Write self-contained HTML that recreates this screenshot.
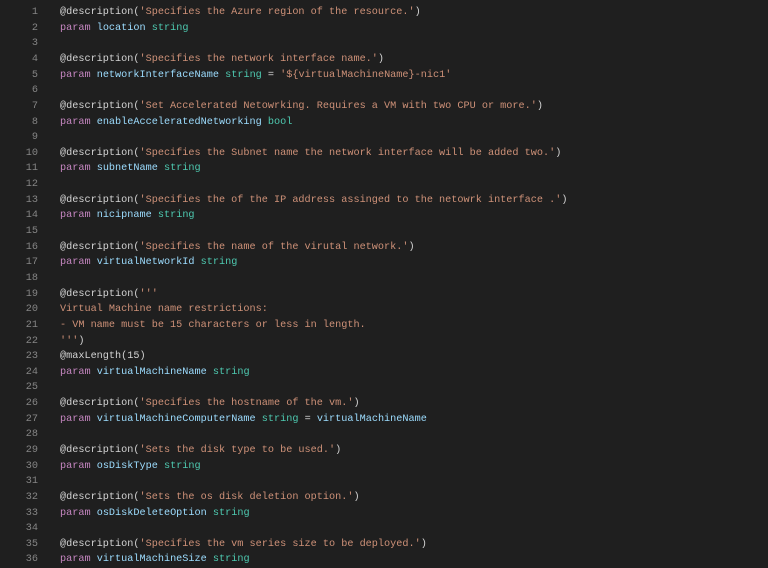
<!DOCTYPE html>
<html><head><meta charset="utf-8"><style>
html,body{margin:0;padding:0;background:#1f1f1f;width:768px;height:560px;overflow:hidden}
.ed{position:absolute;left:0;top:-10.6px;font-family:"Liberation Mono",monospace;font-size:10.2px;line-height:15.65px;color:#d4d4d4}
.l{height:15.65px;position:relative}
.n{position:absolute;left:0;width:38px;text-align:right;color:#858585}
.c{position:absolute;left:60px;white-space:pre}
.d{color:#d4d4d4}
.s{color:#ce9178}
.k{color:#c586c0}
.v{color:#9cdcfe}
.t{color:#4ec9b0}
</style></head><body><div class="ed"><div class="l"><span class="n"></span><span class="c"><span class="d">@description(</span><span class="s">'Specifies the location of the resource group, deployment will be performed in.'</span>)</span></div><div class="l"><span class="n">1</span><span class="c"><span class="d">@description(</span><span class="s">'Specifies the Azure region of the resource.'</span>)</span></div><div class="l"><span class="n">2</span><span class="c"><span class="k">param</span> <span class="v">location</span> <span class="t">string</span></span></div><div class="l"><span class="n">3</span></div><div class="l"><span class="n">4</span><span class="c"><span class="d">@description(</span><span class="s">'Specifies the network interface name.'</span>)</span></div><div class="l"><span class="n">5</span><span class="c"><span class="k">param</span> <span class="v">networkInterfaceName</span> <span class="t">string</span> = <span class="s">'${virtualMachineName}-nic1'</span></span></div><div class="l"><span class="n">6</span></div><div class="l"><span class="n">7</span><span class="c"><span class="d">@description(</span><span class="s">'Set Accelerated Netowrking. Requires a VM with two CPU or more.'</span>)</span></div><div class="l"><span class="n">8</span><span class="c"><span class="k">param</span> <span class="v">enableAcceleratedNetworking</span> <span class="t">bool</span></span></div><div class="l"><span class="n">9</span></div><div class="l"><span class="n">10</span><span class="c"><span class="d">@description(</span><span class="s">'Specifies the Subnet name the network interface will be added two.'</span>)</span></div><div class="l"><span class="n">11</span><span class="c"><span class="k">param</span> <span class="v">subnetName</span> <span class="t">string</span></span></div><div class="l"><span class="n">12</span></div><div class="l"><span class="n">13</span><span class="c"><span class="d">@description(</span><span class="s">'Specifies the of the IP address assinged to the netowrk interface .'</span>)</span></div><div class="l"><span class="n">14</span><span class="c"><span class="k">param</span> <span class="v">nicipname</span> <span class="t">string</span></span></div><div class="l"><span class="n">15</span></div><div class="l"><span class="n">16</span><span class="c"><span class="d">@description(</span><span class="s">'Specifies the name of the virutal network.'</span>)</span></div><div class="l"><span class="n">17</span><span class="c"><span class="k">param</span> <span class="v">virtualNetworkId</span> <span class="t">string</span></span></div><div class="l"><span class="n">18</span></div><div class="l"><span class="n">19</span><span class="c"><span class="d">@description(</span><span class="s">'''</span></span></div><div class="l"><span class="n">20</span><span class="c"><span class="s">Virtual Machine name restrictions:</span></span></div><div class="l"><span class="n">21</span><span class="c"><span class="s">- VM name must be 15 characters or less in length.</span></span></div><div class="l"><span class="n">22</span><span class="c"><span class="s">'''</span>)</span></div><div class="l"><span class="n">23</span><span class="c"><span class="d">@maxLength(15)</span></span></div><div class="l"><span class="n">24</span><span class="c"><span class="k">param</span> <span class="v">virtualMachineName</span> <span class="t">string</span></span></div><div class="l"><span class="n">25</span></div><div class="l"><span class="n">26</span><span class="c"><span class="d">@description(</span><span class="s">'Specifies the hostname of the vm.'</span>)</span></div><div class="l"><span class="n">27</span><span class="c"><span class="k">param</span> <span class="v">virtualMachineComputerName</span> <span class="t">string</span> = <span class="v">virtualMachineName</span></span></div><div class="l"><span class="n">28</span></div><div class="l"><span class="n">29</span><span class="c"><span class="d">@description(</span><span class="s">'Sets the disk type to be used.'</span>)</span></div><div class="l"><span class="n">30</span><span class="c"><span class="k">param</span> <span class="v">osDiskType</span> <span class="t">string</span></span></div><div class="l"><span class="n">31</span></div><div class="l"><span class="n">32</span><span class="c"><span class="d">@description(</span><span class="s">'Sets the os disk deletion option.'</span>)</span></div><div class="l"><span class="n">33</span><span class="c"><span class="k">param</span> <span class="v">osDiskDeleteOption</span> <span class="t">string</span></span></div><div class="l"><span class="n">34</span></div><div class="l"><span class="n">35</span><span class="c"><span class="d">@description(</span><span class="s">'Specifies the vm series size to be deployed.'</span>)</span></div><div class="l"><span class="n">36</span><span class="c"><span class="k">param</span> <span class="v">virtualMachineSize</span> <span class="t">string</span></span></div></div></body></html>
